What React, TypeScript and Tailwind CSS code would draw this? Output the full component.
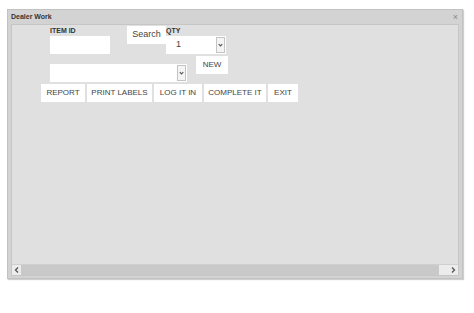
import React from 'react';

const font = { fontFamily: '"Liberation Sans", Arial, sans-serif' };

const Chevron: React.FC<{ dir: 'down' | 'left' | 'right' }> = ({ dir }) => {
  const d =
    dir === 'down' ? 'M2 3 L4 5 L6 3' : dir === 'left' ? 'M5 1.5 L2.5 4 L5 6.5' : 'M3 1.5 L5.5 4 L3 6.5';
  return (
    <svg width="8" height="8" viewBox="0 0 8 8">
      <path d={d} fill="none" stroke="#555" strokeWidth="1.3" />
    </svg>
  );
};

const Btn: React.FC<{ label: string; className?: string }> = ({ label, className = '' }) => (
  <div
    className={`flex h-[18px] items-center justify-center whitespace-nowrap bg-white text-[8px] text-[#444] ${className}`}
    style={font}
  >
    {label}
  </div>
);

const Select: React.FC<{ value?: string; width: string }> = ({ value = '', width }) => (
  <div className={`flex h-[18px] items-stretch bg-white ${width}`}>
    <div className="flex flex-1 items-center pl-[10px] text-[9px] text-[#444]" style={font}>
      {value}
    </div>
    <div className="my-[1px] mr-[1px] flex w-[9px] items-center justify-center border border-[#c4c4c4] bg-[#f4f4f4]">
      <Chevron dir="down" />
    </div>
  </div>
);

const Label: React.FC<{ text: string }> = ({ text }) => (
  <div className="h-[10px] whitespace-nowrap text-[7px] font-bold leading-[9px] text-[#333]" style={font}>
    {text}
  </div>
);

export default function App() {
  return (
    <div className="h-[313px] w-[474px] bg-white pl-[7px] pt-[9px]">
      <div className="flex h-[270px] w-[456px] flex-col border border-[#c2c2c2] bg-[#d3d3d3] shadow-[1px_1px_1px_#cfcfcf]">
        <div className="flex h-[14px] items-center justify-between pl-[3px] pr-[4px]">
          <span className="text-[7px] font-bold text-[#333]" style={font}>
            Dealer Work
          </span>
          <span className="text-[9px] leading-none text-[#888]" style={font}>
            ×
          </span>
        </div>
        <div className="mx-[3px] mb-[2px] flex flex-1 flex-col border border-[#c6c6c6] bg-[#e0e0e0]">
          <div className="flex-1 pt-[1px]">
            <div className="flex items-start">
              <div className="ml-[38px]">
                <Label text="ITEM ID" />
                <div className="h-[18px] w-[60px] bg-white" />
              </div>
              <Btn label="Search" className="ml-[17px] w-[39px] text-[9px]" />
              <div>
                <Label text="QTY" />
                <Select value="1" width="w-[60px]" />
              </div>
            </div>
            <div className="flex items-start">
              <div className="ml-[38px] mt-[10px]">
                <Select width="w-[137px]" />
              </div>
              <Btn label="NEW" className="ml-[9px] mt-[2px] w-[32px]" />
            </div>
            <div className="ml-[29px] mt-[2px] flex gap-[2px]">
              <Btn label="REPORT" className="w-[44px]" />
              <Btn label="PRINT LABELS" className="w-[65px]" />
              <Btn label="LOG IT IN" className="w-[48px]" />
              <Btn label="COMPLETE IT" className="w-[62px]" />
              <Btn label="EXIT" className="w-[30px]" />
            </div>
          </div>
          <div className="flex h-[11px] items-center border-t border-[#cfcfcf] bg-[#c9c9c9]">
            <div className="flex h-[10px] w-[9px] items-center justify-center bg-[#ececec]">
              <Chevron dir="left" />
            </div>
            <div className="flex-1" />
            <div className="flex h-[10px] w-[19px] items-center justify-end bg-[#ececec] pr-[1px]">
              <Chevron dir="right" />
            </div>
          </div>
        </div>
      </div>
    </div>
  );
}
